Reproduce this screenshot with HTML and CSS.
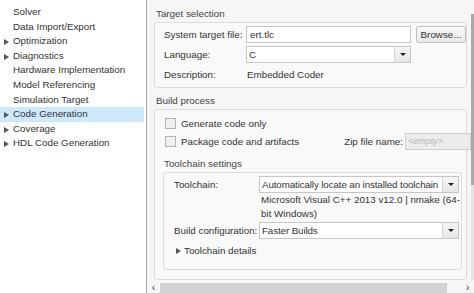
FILE: index.html
```html
<!DOCTYPE html>
<html lang="en">
<head>
    <meta charset="UTF-8">
    <title>Configuration Parameters - Code Generation</title>
    <link rel="stylesheet" href="styles.css">
</head>
<body>
    <div class="window">
        <ul class="tree">
            <li class="tree-item">Solver</li>
            <li class="tree-item">Data Import/Export</li>
            <li class="tree-item has-children">Optimization</li>
            <li class="tree-item has-children">Diagnostics</li>
            <li class="tree-item">Hardware Implementation</li>
            <li class="tree-item">Model Referencing</li>
            <li class="tree-item">Simulation Target</li>
            <li class="tree-item has-children selected">Code Generation</li>
            <li class="tree-item has-children">Coverage</li>
            <li class="tree-item has-children">HDL Code Generation</li>
        </ul>

        <div class="pane">
            <div class="pane-body">
                <div class="content">
                    <div class="group-title">Target selection</div>
                    <div class="group target-group">
                        <div class="field-row">
                            <span class="field-label">System target file:</span>
                            <input class="text-input target-input" type="text" value="ert.tlc">
                            <button class="button">Browse...</button>
                        </div>
                        <div class="field-row">
                            <span class="field-label">Language:</span>
                            <div class="select target-input">
                                <span class="select-value">C</span>
                                <span class="select-arrow"></span>
                            </div>
                        </div>
                        <div class="field-row">
                            <span class="field-label">Description:</span>
                            <span class="field-value">Embedded Coder</span>
                        </div>
                    </div>

                    <div class="group-title build-title">Build process</div>
                    <div class="group build-group">
                        <label class="check-row">
                            <span class="checkbox"></span>
                            <span>Generate code only</span>
                        </label>
                        <div class="check-row">
                            <span class="checkbox"></span>
                            <span>Package code and artifacts</span>
                            <span class="zip-label">Zip file name:</span>
                            <span class="zip-input">&lt;empty&gt;</span>
                        </div>

                        <div class="group-title sub-title">Toolchain settings</div>
                        <div class="group toolchain-group">
                            <div class="field-row">
                                <span class="field-label wide">Toolchain:</span>
                                <div class="select wide-select">
                                    <span class="select-value">Automatically locate an installed toolchain</span>
                                    <span class="select-arrow"></span>
                                </div>
                            </div>
                            <div class="toolchain-note">Microsoft Visual C++ 2013 v12.0 | nmake (64-bit Windows)</div>
                            <div class="field-row">
                                <span class="field-label wide">Build configuration:</span>
                                <div class="select wide-select">
                                    <span class="select-value">Faster Builds</span>
                                    <span class="select-arrow"></span>
                                </div>
                            </div>
                            <div class="details-row">Toolchain details</div>
                        </div>
                    </div>
                </div>
                <div class="vscroll"><div class="vscroll-thumb"></div></div>
            </div>
            <div class="hscroll">
                <span class="scroll-arrow">&lsaquo;</span>
                <div class="hscroll-track"><div class="hscroll-thumb"></div></div>
                <span class="scroll-arrow">&rsaquo;</span>
            </div>
        </div>
    </div>
</body>
</html>
```

FILE: styles.css
```css
* {
    box-sizing: border-box;
}
body {
    margin: 0;
    font-family: "Liberation Sans", Arial, sans-serif;
    font-size: 9.8px;
    color: #333;
    background-color: #fff;
}
.window {
    display: flex;
    width: 474px;
    height: 293px;
    overflow: hidden;
}
.tree {
    list-style: none;
    margin: 0;
    padding: 5px 0 0;
    width: 147px;
    flex-shrink: 0;
    border-right: 1px solid #a8a8a8;
    background-color: #fff;
}
.tree-item {
    position: relative;
    height: 14.6px;
    line-height: 14.6px;
    padding-left: 13px;
    margin-right: 2px;
    white-space: nowrap;
}
.tree-item.has-children::before {
    content: "";
    position: absolute;
    left: 4px;
    top: 5px;
    border-left: 5px solid #555;
    border-top: 3px solid transparent;
    border-bottom: 3px solid transparent;
}
.tree-item.selected {
    background-color: #cde8fb;
}
.pane {
    flex: 1;
    display: flex;
    flex-direction: column;
    background-color: #f6f6f6;
    min-width: 0;
}
.pane-body {
    flex: 1;
    display: flex;
    min-height: 0;
}
.content {
    flex: 1;
    padding: 7px 4px 0 7px;
    overflow: hidden;
}
.group-title {
    line-height: 14px;
    margin: 0 0 1px 2px;
    color: #444;
}
.build-title {
    margin-top: 6px;
}
.group {
    border: 1px solid #dcdcdc;
    border-radius: 3px;
    background-color: #f9f9f9;
}
.target-group {
    padding: 3px 0 4px 9px;
    display: flex;
    flex-direction: column;
    gap: 3px;
}
.field-row {
    display: flex;
    align-items: center;
    height: 17px;
}
.field-label {
    width: 82px;
    flex-shrink: 0;
    white-space: nowrap;
}
.field-label.wide {
    width: 85px;
}
.field-value {
    padding-left: 1px;
}
.text-input {
    font: inherit;
    color: #333;
    height: 17px;
    border: 1px solid #c6c6c6;
    background-color: #fff;
    padding: 0 3px;
    margin: 0;
}
.target-input {
    width: 165px;
}
.button {
    font: inherit;
    color: #333;
    height: 17px;
    width: 50px;
    margin-left: 5px;
    padding: 0;
    border: 1px solid #c2c2c2;
    border-radius: 2px;
    background: linear-gradient(#f8f8f8, #e8e8e8);
}
.select {
    display: flex;
    height: 17px;
    border: 1px solid #c6c6c6;
    background-color: #fff;
}
.select-value {
    flex: 1;
    padding: 0 1px 0 2px;
    line-height: 15px;
    letter-spacing: -0.12px;
    white-space: nowrap;
    overflow: hidden;
}
.select-arrow {
    position: relative;
    width: 16px;
    flex-shrink: 0;
    border-left: 1px solid #d6d6d6;
    background: linear-gradient(#f6f6f6, #e6e6e6);
}
.select-arrow::after {
    content: "";
    position: absolute;
    left: 5px;
    top: 6px;
    border-top: 3px solid #222;
    border-left: 3px solid transparent;
    border-right: 3px solid transparent;
}
.build-group {
    padding: 4px 4px 9px 8px;
}
.check-row {
    display: flex;
    align-items: center;
    height: 18px;
    padding-left: 2px;
    white-space: nowrap;
}
.checkbox {
    flex-shrink: 0;
    width: 11px;
    height: 11px;
    border: 1px solid #b4b4b4;
    background-color: #f0f0f0;
    margin-right: 5px;
}
.zip-label {
    margin-left: 45px;
}
.zip-input {
    flex-shrink: 0;
    width: 66px;
    height: 17px;
    line-height: 15px;
    margin-left: 2px;
    padding: 0 2px;
    border: 1px solid #d0d0d0;
    background-color: #ececec;
    color: #b8b8b8;
    font-style: italic;
    font-size: 9px;
}
.sub-title {
    margin-top: 7px;
    margin-left: 1px;
}
.toolchain-group {
    padding: 3px 2px 11px 10px;
}
.wide-select {
    width: 202px;
}
.toolchain-note {
    margin-left: 87px;
    line-height: 14px;
    width: 200px;
}
.toolchain-note + .field-row {
    margin-top: 1px;
}
.details-row {
    position: relative;
    margin-top: 5px;
    padding-left: 10px;
    line-height: 14px;
}
.details-row::before {
    content: "";
    position: absolute;
    left: 2px;
    top: 4px;
    border-left: 5px solid #555;
    border-top: 3px solid transparent;
    border-bottom: 3px solid transparent;
}
.vscroll {
    width: 3px;
    margin-top: 14px;
    background-color: #e4e4e4;
}
.vscroll-thumb {
    height: 171px;
    background-color: #a8a8a8;
}
.hscroll {
    display: flex;
    align-items: center;
    height: 10px;
    margin-top: 3px;
    background-color: #f6f6f6;
}
.scroll-arrow {
    width: 13px;
    height: 10px;
    text-align: center;
    font-size: 11px;
    line-height: 9px;
    color: #444;
}
.hscroll-track {
    flex: 1;
    height: 10px;
    margin-right: 3px;
}
.hscroll-thumb {
    width: 287px;
    height: 10px;
    background-color: #d2d2d2;
}
```
